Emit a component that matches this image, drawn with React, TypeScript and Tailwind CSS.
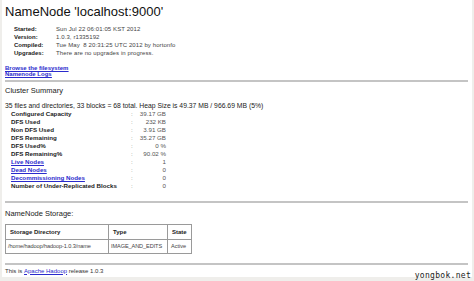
export default function App() {
  const info = [
    ["Started:", "Sun Jul 22 06:01:05 KST 2012"],
    ["Version:", "1.0.3, r1335192"],
    ["Compiled:", "Tue May  8 20:31:25 UTC 2012 by hortonfo"],
    ["Upgrades:", "There are no upgrades in progress."],
  ];
  const summary: [string, string, boolean][] = [
    ["Configured Capacity", "39.17 GB", false],
    ["DFS Used", "232 KB", false],
    ["Non DFS Used", "3.91 GB", false],
    ["DFS Remaining", "35.27 GB", false],
    ["DFS Used%", "0 %", false],
    ["DFS Remaining%", "90.02 %", false],
    ["Live Nodes", "1", true],
    ["Dead Nodes", "0", true],
    ["Decommissioning Nodes", "0", true],
    ["Number of Under-Replicated Blocks", "0", false],
  ];

  return (
    <div className="relative flex h-[281px] w-[474px] overflow-hidden bg-[#efeeeb] pl-[2px] pr-[2px] pb-[4px] font-['Liberation_Sans',Arial,sans-serif] text-[#222]">
      <div className="flex flex-1 flex-col bg-white pl-[3px]">
        <h1 className="flex h-[22px] items-center text-[13px] font-normal leading-none text-[#111]">
          NameNode 'localhost:9000'
        </h1>

        <div className="mt-[3px] flex flex-col pl-[9px] text-[6px]">
          {info.map(([k, v]) => (
            <div key={k} className="flex h-[8px] items-center whitespace-pre">
              <span className="w-[42px] font-bold">{k}</span>
              <span className="text-[#444] tracking-[0.1px]">{v}</span>
            </div>
          ))}
        </div>

        <div className="mt-[8px] flex flex-col text-[6px] font-bold text-[#2a2acc] underline">
          <a className="flex h-[6.5px] items-center">Browse the filesystem</a>
          <a className="flex h-[6.5px] items-center">Namenode Logs</a>
        </div>

        <hr className="mt-[2px] mr-[4px] h-[2px] border-0 bg-[#c4c4c4]" />

        <div className="mt-[4px] flex h-[10px] items-center text-[7.5px]">Cluster Summary</div>

        <div className="mt-[7px] flex h-[7px] items-center text-[6.8px] whitespace-nowrap">
          35 files and directories, 33 blocks = 68 total. Heap Size is 49.37 MB / 966.69 MB (5%)
        </div>

        <div className="flex flex-col pl-[6px] text-[6.2px] whitespace-nowrap">
          {summary.map(([k, v, link]) => (
            <div key={k} className="flex h-[8px] items-center">
              <span
                className={`w-[120px] font-bold ${link ? "text-[#2a2acc] underline" : ""}`}
              >
                {k}
              </span>
              <span className="w-[8px] text-[#777]">:</span>
              <span className="w-[27px] text-right text-[#555]">{v}</span>
            </div>
          ))}
        </div>

        <hr className="mt-[11px] mr-[4px] h-[2px] border-0 bg-[#c4c4c4]" />

        <div className="mt-[6px] flex h-[10px] items-center text-[7.5px]">NameNode Storage:</div>

        <table className="mt-[5px] w-[187px] table-fixed border-collapse border border-[#9a9a9a] text-[6px] whitespace-nowrap">
          <thead>
            <tr className="h-[15px] text-left font-bold">
              <th className="w-[103px] border border-[#9a9a9a] px-[4px]">Storage Directory</th>
              <th className="w-[59px] border border-[#9a9a9a] px-[4px]">Type</th>
              <th className="border border-[#9a9a9a] px-[4px]">State</th>
            </tr>
          </thead>
          <tbody>
            <tr className="h-[14px] text-[5.6px] text-[#444]">
              <td className="border border-[#9a9a9a] px-[2px] tracking-[-0.1px]">/home/hadoop/hadoop-1.0.3/name</td>
              <td className="border border-[#9a9a9a] px-[2px] tracking-[-0.1px]">IMAGE_AND_EDITS</td>
              <td className="border border-[#9a9a9a] px-[3px]">Active</td>
            </tr>
          </tbody>
        </table>

        <hr className="mt-[9px] mr-[4px] h-[2px] border-0 bg-[#c4c4c4]" />

        <div className="mt-[2px] flex h-[8px] items-center text-[6px] text-[#333]">
          This is&nbsp;<a className="text-[#2a2acc] underline">Apache Hadoop</a>&nbsp;release 1.0.3
        </div>
      </div>

      <span className="absolute bottom-[0px] right-[3px] font-['DejaVu_Sans_Mono',monospace] text-[8px] leading-[10px] tracking-[0.3px] text-[#222]">
        yongbok.net
      </span>
    </div>
  );
}
